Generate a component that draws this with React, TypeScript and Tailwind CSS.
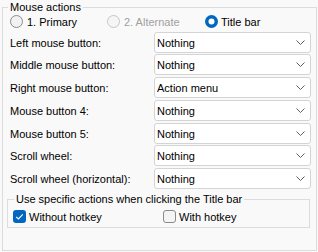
import React from "react";

const font = { fontFamily: '"Liberation Sans", Arial, sans-serif' };

function Radio({ state }: { state: "off" | "on" | "disabled" }) {
  if (state === "on") {
    return (
      <svg width="13" height="13" viewBox="0 0 13 13" className="shrink-0">
        <circle cx="6.5" cy="6.5" r="6.5" fill="#0067c0" />
        <circle cx="6.5" cy="6.5" r="3" fill="#ffffff" />
      </svg>
    );
  }
  const stroke = state === "disabled" ? "#c5c5c5" : "#8a8a8a";
  const fill = state === "disabled" ? "#f5f5f5" : "#f2f2f2";
  return (
    <svg width="13" height="13" viewBox="0 0 13 13" className="shrink-0">
      <circle cx="6.5" cy="6.5" r="6" fill={fill} stroke={stroke} strokeWidth="1" />
    </svg>
  );
}

function Check({ checked }: { checked: boolean }) {
  if (checked) {
    return (
      <svg width="13" height="13" viewBox="0 0 13 13" className="shrink-0">
        <rect x="0" y="0" width="13" height="13" rx="3" fill="#0067c0" />
        <path d="M3.2 6.8 L5.4 9 L9.8 4.4" fill="none" stroke="#ffffff" strokeWidth="1.1" />
      </svg>
    );
  }
  return (
    <svg width="13" height="13" viewBox="0 0 13 13" className="shrink-0">
      <rect x="0.5" y="0.5" width="12" height="12" rx="2.5" fill="#f4f4f4" stroke="#8a8a8a" strokeWidth="1" />
    </svg>
  );
}

function Row({ label, value, mt }: { label: string; value: string; mt: string }) {
  return (
    <div className={`flex items-center h-[21px] ${mt}`}>
      <div className="flex-1 pl-[7px] text-black whitespace-nowrap">{label}</div>
      <div className="w-[157px] h-[21px] mr-[5px] bg-white border border-[#d4d4d4] rounded-[3px] flex items-center pl-[2px] pr-[5px]">
        <span className="flex-1 text-black">{value}</span>
        <svg width="9" height="5" viewBox="0 0 9 5" className="shrink-0">
          <path d="M0.5 0.5 L4.5 4.5 L8.5 0.5" fill="none" stroke="#606060" strokeWidth="1" />
        </svg>
      </div>
    </div>
  );
}

export default function App() {
  return (
    <div className="w-[318px] h-[252px] bg-[#f9f9f9] text-[11px] leading-[14px] overflow-hidden" style={font}>
      <fieldset className="ml-[2px] w-[315px] h-[251px] border border-[#dcdcdc] p-0 m-0">
        <legend className="ml-[5px] px-[2px] leading-[14px] text-black">Mouse actions</legend>
        <div className="flex items-center h-[13px] mt-[1px] pl-[7px]">
          <div className="flex items-center w-[97px] gap-[4px]">
            <Radio state="off" />
            <span className="text-black">1. Primary</span>
          </div>
          <div className="flex items-center w-[98px] gap-[4px]">
            <Radio state="disabled" />
            <span className="text-[#a0a0a0]">2. Alternate</span>
          </div>
          <div className="flex items-center gap-[3px]">
            <Radio state="on" />
            <span className="text-black">Title bar</span>
          </div>
        </div>
        <Row label="Left mouse button:" value="Nothing" mt="mt-[4px]" />
        <Row label="Middle mouse button:" value="Nothing" mt="mt-[1px]" />
        <Row label="Right mouse button:" value="Action menu" mt="mt-[2px]" />
        <Row label="Mouse button 4:" value="Nothing" mt="mt-[2px]" />
        <Row label="Mouse button 5:" value="Nothing" mt="mt-[2px]" />
        <Row label="Scroll wheel:" value="Nothing" mt="mt-[1px]" />
        <Row label="Scroll wheel (horizontal):" value="Nothing" mt="mt-[2px]" />
        <fieldset className="ml-[4px] mt-[3px] w-[303px] h-[36px] border border-[#dcdcdc] p-0">
          <legend className="ml-[6px] px-[2px] leading-[14px] text-black">
            Use specific actions when clicking the Title bar
          </legend>
          <div className="flex items-center h-[13px] mt-[4px] pl-[5px]">
            <div className="flex items-center w-[150px] gap-[3px]">
              <Check checked={true} />
              <span className="text-black">Without hotkey</span>
            </div>
            <div className="flex items-center gap-[3px]">
              <Check checked={false} />
              <span className="text-black">With hotkey</span>
            </div>
          </div>
        </fieldset>
      </fieldset>
    </div>
  );
}
